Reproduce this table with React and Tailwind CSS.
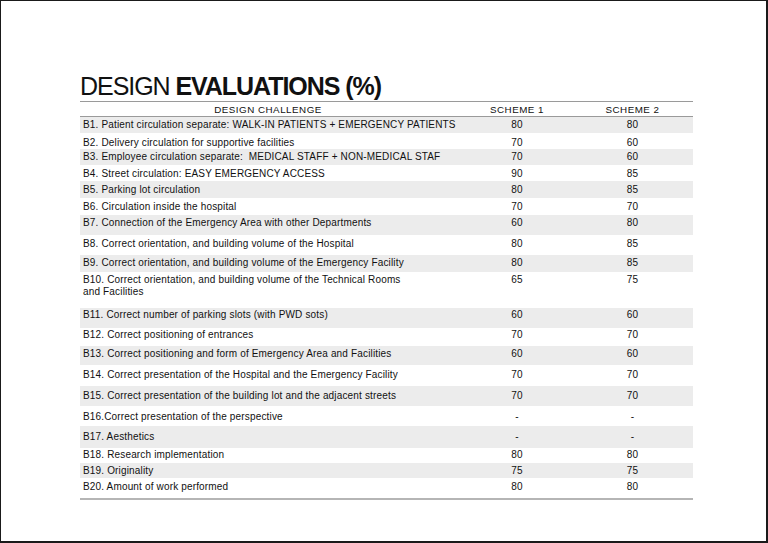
import React from 'react';

const rows = [
  { label: 'B1. Patient circulation separate: WALK-IN PATIENTS + EMERGENCY PATIENTS', s1: '80', s2: '80', h: 'h-[16px]', pt: 'pt-[2px]' },
  { label: 'B2. Delivery circulation for supportive facilities', s1: '70', s2: '60', h: 'h-[16px]', pt: 'pt-[4px]' },
  { label: 'B3. Employee circulation separate:  MEDICAL STAFF + NON-MEDICAL STAF', s1: '70', s2: '60', h: 'h-[16px]', pt: 'pt-[2px]' },
  { label: 'B4. Street circulation: EASY EMERGENCY ACCESS', s1: '90', s2: '85', h: 'h-[16px]', pt: 'pt-[3px]' },
  { label: 'B5. Parking lot circulation', s1: '80', s2: '85', h: 'h-[17px]', pt: 'pt-[3px]' },
  { label: 'B6. Circulation inside the hospital', s1: '70', s2: '70', h: 'h-[17px]', pt: 'pt-[3px]' },
  { label: 'B7. Connection of the Emergency Area with other Departments', s1: '60', s2: '80', h: 'h-[20px]', pt: 'pt-[2px]' },
  { label: 'B8. Correct orientation, and building volume of the Hospital', s1: '80', s2: '85', h: 'h-[20px]', pt: 'pt-[3px]' },
  { label: 'B9. Correct orientation, and building volume of the Emergency Facility', s1: '80', s2: '85', h: 'h-[17px]', pt: 'pt-[2px]' },
  { label: 'B10. Correct orientation, and building volume of the Technical Rooms\nand Facilities', s1: '65', s2: '75', h: 'h-[36px]', pt: 'pt-[2px]' },
  { label: 'B11. Correct number of parking slots (with PWD sots)', s1: '60', s2: '60', h: 'h-[20px]', pt: 'pt-[1px]' },
  { label: 'B12. Correct positioning of entrances', s1: '70', s2: '70', h: 'h-[18px]', pt: 'pt-[1px]' },
  { label: 'B13. Correct positioning and form of Emergency Area and Facilities', s1: '60', s2: '60', h: 'h-[19px]', pt: 'pt-[2px]' },
  { label: 'B14. Correct presentation of the Hospital and the Emergency Facility', s1: '70', s2: '70', h: 'h-[21px]', pt: 'pt-[4px]' },
  { label: 'B15. Correct presentation of the building lot and the adjacent streets', s1: '70', s2: '70', h: 'h-[20px]', pt: 'pt-[4px]' },
  { label: 'B16.Correct presentation of the perspective', s1: '-', s2: '-', h: 'h-[20px]', pt: 'pt-[5px]' },
  { label: 'B17. Aesthetics', s1: '-', s2: '-', h: 'h-[22px]', pt: 'pt-[5px]' },
  { label: 'B18. Research implementation', s1: '80', s2: '80', h: 'h-[15px]', pt: 'pt-[1px]' },
  { label: 'B19. Originality', s1: '75', s2: '75', h: 'h-[15px]', pt: 'pt-[2px]' },
  { label: 'B20. Amount of work performed', s1: '80', s2: '80', h: 'h-[20px]', pt: 'pt-[3px]' },
];

const App = () => {
  return (
    <div
      className="w-[768px] h-[543px] bg-white border-t border-l border-r-2 border-b-2 border-[#1a1a1a] text-[#111] overflow-hidden"
      style={{ fontFamily: '"Liberation Sans", Arial, sans-serif' }}
    >
      <div className="pl-[79px] pt-[73px] w-[692px]">
        {/* Title */}
        <h1 className="h-[27px] text-[25px] leading-[25px] tracking-[-1.05px] whitespace-nowrap">
          DESIGN <span className="font-bold">EVALUATIONS (%)</span>
        </h1>

        {/* Table */}
        <div className="border-t border-[#9a9a9a] border-b-2 border-b-[#b5b5b5]">
          <div className="grid grid-cols-[376px_122px_1fr] h-[15px] border-b border-[#9a9a9a] text-[9.8px] leading-[12px] tracking-[0.5px] pt-[2px]">
            <div className="text-center">DESIGN CHALLENGE</div>
            <div className="text-center">SCHEME 1</div>
            <div className="text-center pr-[6px]">SCHEME 2</div>
          </div>

          {rows.map((row, i) => (
            <div
              key={i}
              className={`grid grid-cols-[376px_122px_1fr] text-[10px] leading-[12px] tracking-[0.16px] ${row.h} ${row.pt} ${i % 2 === 0 ? 'bg-[#ececec]' : 'bg-white'}`}
            >
              <div className="pl-[3px] whitespace-pre">{row.label}</div>
              <div className="text-center">{row.s1}</div>
              <div className="text-center pr-[6px]">{row.s2}</div>
            </div>
          ))}
        </div>
      </div>
    </div>
  );
};

export default App;
